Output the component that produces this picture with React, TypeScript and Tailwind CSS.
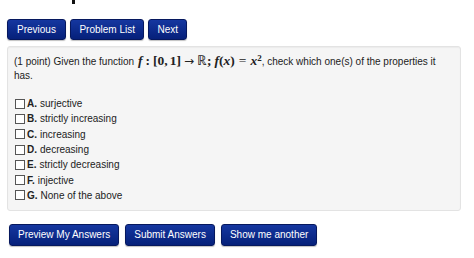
import React from 'react';

const btn =
  'h-full rounded-[3px] border border-[#06185e] bg-gradient-to-b from-[#1537a0] to-[#06207a] text-white text-[10px] leading-none shadow-[0_1px_1px_rgba(0,0,0,0.25)]';

const options = [
  { key: 'A', text: 'surjective' },
  { key: 'B', text: 'strictly increasing' },
  { key: 'C', text: 'increasing' },
  { key: 'D', text: 'decreasing' },
  { key: 'E', text: 'strictly decreasing' },
  { key: 'F', text: 'injective' },
  { key: 'G', text: 'None of the above' },
];

function Math() {
  return (
    <span className="font-['Liberation_Serif',serif] text-[13.5px] font-bold ml-[4px]">
      <i>f</i>
      <span className="mx-[3px]">:</span>[0,<span className="ml-[2px]">1]</span>
      <span className="font-['DejaVu_Sans',sans-serif] font-normal text-[12px] mx-[3px]">→</span>
      <span className="font-normal">ℝ</span>;<span className="ml-[3px]" />
      <i>f</i>(<i>x</i>)<span className="font-normal mx-[4px]">=</span>
      <i>x</i>
      <sup className="text-[9px]">2</sup>
    </span>
  );
}

export default function App() {
  return (
    <div className="w-[474px] h-[258px] bg-white font-['Liberation_Sans',Arial,sans-serif] text-[#222] overflow-hidden">
      <div className="h-[19px]">
        <div className="ml-[72px] w-[3px] h-[4px] bg-[#111]" />
      </div>

      <div className="flex gap-[4px] ml-[7px] h-[21px]">
        <button className={`${btn} px-[9px]`}>Previous</button>
        <button className={`${btn} px-[8.5px]`}>Problem List</button>
        <button className={`${btn} px-[8px]`}>Next</button>
      </div>

      <div className="mt-[6px] ml-[7px] w-[454px] h-[165px] bg-[#f5f5f5] border border-[#e3e3e3] rounded-[3px] px-[6px] pt-[7px] shadow-[inset_0_1px_1px_rgba(0,0,0,0.04)]">
        <p className="text-[10px] leading-[13.5px] h-[27px] whitespace-nowrap">
          (1 point) Given the function
          <Math />, check which one(s) of the properties it
          <br />
          has.
        </p>

        <div className="mt-[15px]">
          {options.map((o) => (
            <div key={o.key} className="flex items-center h-[15.3px] text-[10px]">
              <span className="w-[10px] h-[10px] ml-[1px] mr-[2px] border border-[#555] bg-white" />
              <b>{o.key}.</b>
              <span className="ml-[3px]">{o.text}</span>
            </div>
          ))}
        </div>
      </div>

      <div className="flex gap-[6px] ml-[9px] mt-[13px] h-[22px]">
        <button className={`${btn} px-[8px]`}>Preview My Answers</button>
        <button className={`${btn} px-[8px]`}>Submit Answers</button>
        <button className={`${btn} px-[8px]`}>Show me another</button>
      </div>
    </div>
  );
}
